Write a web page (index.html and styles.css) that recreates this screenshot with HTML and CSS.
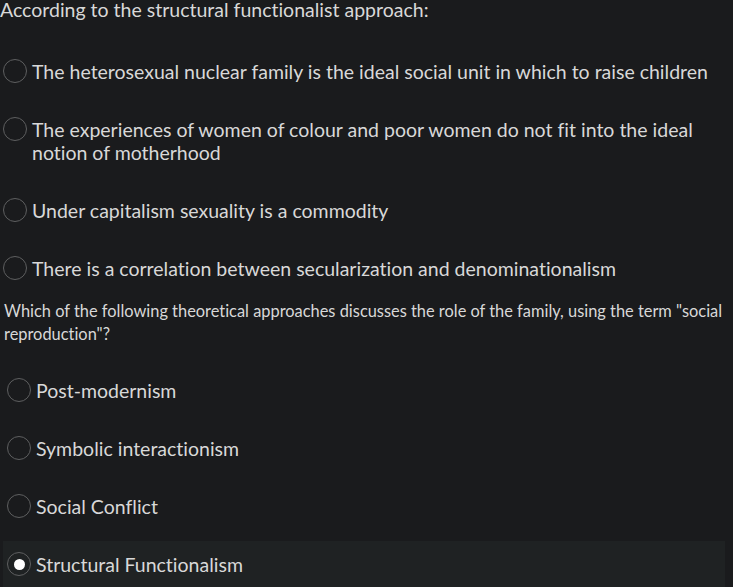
FILE: index.html
```html
<!DOCTYPE html>
<html>
<head>
<meta charset="utf-8">
<link rel="stylesheet" href="styles.css">
</head>
<body>
<div class="page">
  <section class="q q1">
    <div class="q-title">According to the structural functionalist approach:</div>
    <div class="opts">
      <div class="opt"><span class="radio"></span><span class="lbl">The heterosexual nuclear family is the ideal social unit in which to raise children</span></div>
      <div class="opt"><span class="radio"></span><span class="lbl">The experiences of women of colour and poor women do not fit into the ideal notion of motherhood</span></div>
      <div class="opt"><span class="radio"></span><span class="lbl">Under capitalism sexuality is a commodity</span></div>
      <div class="opt"><span class="radio"></span><span class="lbl">There is a correlation between secularization and denominationalism</span></div>
    </div>
  </section>
  <section class="q q2">
    <div class="q-text">Which of the following theoretical approaches discusses the role of the family, using the term "social reproduction"?</div>
    <div class="opts">
      <div class="opt"><span class="radio"></span><span class="lbl">Post-modernism</span></div>
      <div class="opt"><span class="radio"></span><span class="lbl">Symbolic interactionism</span></div>
      <div class="opt"><span class="radio"></span><span class="lbl">Social Conflict</span></div>
      <div class="opt selected"><span class="radio checked"></span><span class="lbl">Structural Functionalism</span></div>
    </div>
  </section>
</div>
</body>
</html>
```
FILE: styles.css
```css
html, body {
  margin: 0;
  padding: 0;
  background: #1a1b1d;
  height: 100%;
  overflow: hidden;
}
body {
  font-family: Lato, "Noto Sans", sans-serif;
  color: #d8d8d8;
  font-variant-ligatures: no-common-ligatures;
}
.page {
  width: 733px;
  padding-top: 1px;
}
.q-title {
  font-size: 19.5px;
  line-height: 18px;
  margin: 0 0 29px;
}
.opt {
  display: flex;
  align-items: flex-start;
  gap: 5px;
  padding: 12px 0;
  margin-bottom: 11px;
  line-height: 23px;
}
.q1 .opt {
  font-size: 19.5px;
  padding-left: 3px;
}
.radio {
  flex: none;
  box-sizing: border-box;
  width: 24px;
  height: 24px;
  border: 1px solid #5e5f60;
  border-radius: 50%;
  margin-top: -1px;
  display: flex;
  align-items: center;
  justify-content: center;
}
.radio.checked::after {
  content: "";
  width: 11px;
  height: 11px;
  border-radius: 50%;
  background: #ffffff;
}
.q2 {
  margin-left: 3px;
  width: 722px;
  margin-top: -4px;
}
.q-text {
  font-size: 16.4px;
  line-height: 23px;
  padding-left: 1px;
  margin-right: -4px;
  margin-bottom: 22px;
}
.q2 .opt {
  font-size: 19.5px;
  padding-left: 4px;
  gap: 5px;
}
.opt.selected {
  background: #1f2223;
}
```
